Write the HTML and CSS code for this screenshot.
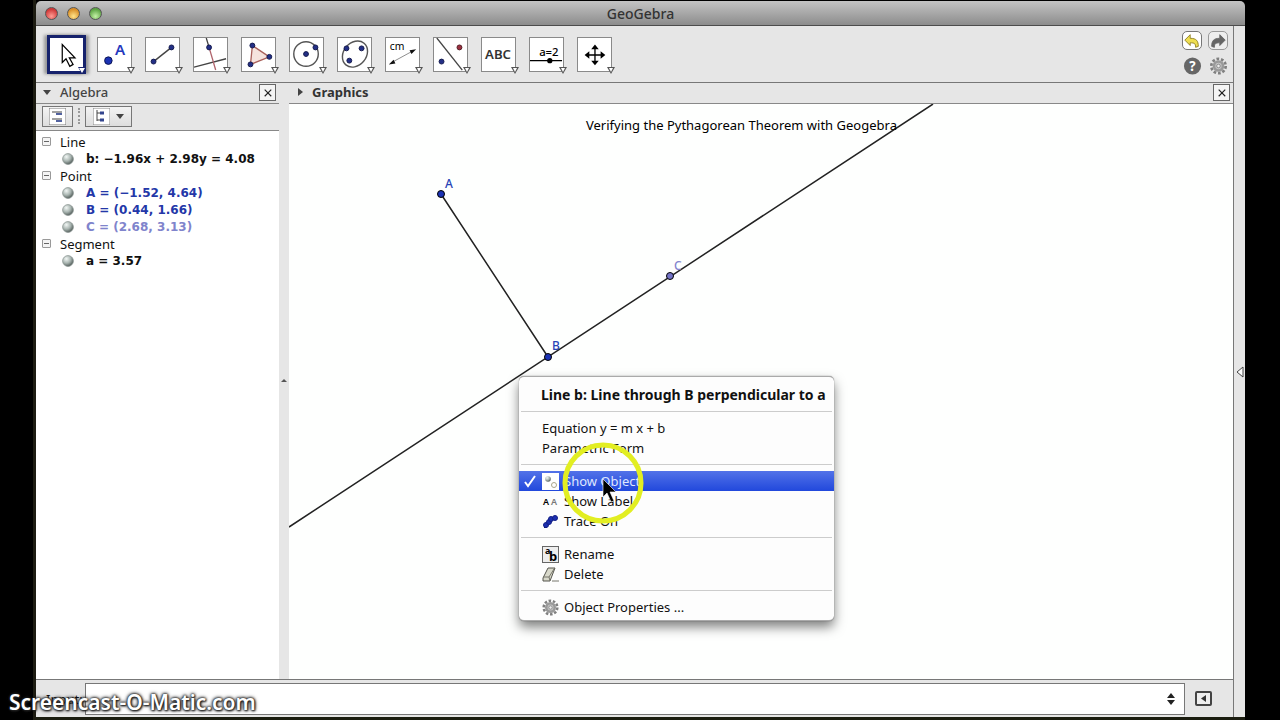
FILE: index.html
```html
<!DOCTYPE html>
<html lang="en">
<head>
    <meta charset="UTF-8">
    <meta name="viewport" content="width=device-width, initial-scale=1.0">
    <title>GeoGebra</title>
    <link rel="stylesheet" href="styles.css">
</head>
<body>
    <!-- Shared symbols -->
    <svg class="defs" width="0" height="0" aria-hidden="true">
        <defs>
            <radialGradient id="ball" cx="0.35" cy="0.3" r="0.8">
                <stop offset="0" stop-color="#f2f7f5"/>
                <stop offset="0.5" stop-color="#a9b5b1"/>
                <stop offset="1" stop-color="#3c4744"/>
            </radialGradient>
            <symbol id="marble" viewBox="0 0 12 12">
                <circle cx="6" cy="6" r="5.4" fill="url(#ball)" stroke="#8d9794" stroke-width="0.8"/>
            </symbol>
            <symbol id="gear" viewBox="0 0 20 20">
                <circle cx="10" cy="10" r="8" fill="none" stroke="#808080" stroke-width="3" stroke-dasharray="3 2.03"/>
                <circle cx="10" cy="10" r="5" fill="#c4c4c4" stroke="#9a9a9a" stroke-width="3"/>
                <circle cx="10" cy="10" r="2" fill="#eee" stroke="#888"/>
            </symbol>
        </defs>
    </svg>

    <div class="window">
        <header class="titlebar">
            <div class="lights">
                <button class="light red" aria-label="Close"></button>
                <button class="light yellow" aria-label="Minimize"></button>
                <button class="light green" aria-label="Zoom"></button>
            </div>
            <h1>GeoGebra</h1>
        </header>

        <div class="frame">
            <div class="content">
                <div class="toolbar">
                    <div class="tools">
                        <button class="tool selected" aria-label="Move">
                            <svg viewBox="0 0 35 35"><path d="M13 7v19l4-4 4 8 3.500-2-4-7h6z" fill="#fff" stroke="#000" stroke-width="1.3"/></svg>
                        </button>
                        <button class="tool" aria-label="New Point">
                            <svg viewBox="0 0 35 35"><circle cx="11" cy="24" r="4" fill="#1b32b4" stroke="#0a1250"/><text x="18" y="18" class="icon-a">A</text></svg>
                        </button>
                        <button class="tool" aria-label="Line">
                            <svg viewBox="0 0 35 35"><path d="M8 25L27 10" stroke="#444" stroke-width="1.5"/><g class="dots"><circle cx="8" cy="25" r="2.6"/><circle cx="27" cy="10" r="2.6"/></g></svg>
                        </button>
                        <button class="tool" aria-label="Perpendicular Line">
                            <svg viewBox="0 0 35 35"><path d="M0 31L34 22M13 0l3 10" stroke="#444" stroke-width="1.4"/><path d="M16 10l7 24" stroke="#b0646c" stroke-width="1.4"/><g class="dots"><circle cx="16" cy="10" r="2.6"/></g></svg>
                        </button>
                        <button class="tool" aria-label="Polygon">
                            <svg viewBox="0 0 35 35"><path d="M11 8L29 20 9 28z" fill="#f6e3de" stroke="#a9605a" stroke-width="1.4"/><g class="dots"><circle cx="11" cy="8" r="2.6"/><circle cx="29" cy="20" r="2.6"/><circle cx="9" cy="28" r="2.6"/></g></svg>
                        </button>
                        <button class="tool" aria-label="Circle">
                            <svg viewBox="0 0 35 35"><circle cx="17" cy="17" r="13" fill="none" stroke="#555" stroke-width="1.5"/><g class="dots"><circle cx="17" cy="17" r="2.6"/><circle cx="27" cy="10" r="2.6"/></g></svg>
                        </button>
                        <button class="tool" aria-label="Ellipse">
                            <svg viewBox="0 0 35 35"><ellipse cx="18" cy="17" rx="12" ry="15" transform="rotate(40 18 17)" fill="none" stroke="#555" stroke-width="1.5"/><g class="dots"><circle cx="9" cy="11" r="2.6"/><circle cx="25" cy="11" r="2.6"/><circle cx="12" cy="24" r="2.6"/></g></svg>
                        </button>
                        <button class="tool" aria-label="Distance">
                            <svg viewBox="0 0 35 35"><text x="4" y="13" class="icon-cm">cm</text><path d="M6 26L28 14" stroke="#888"/><path d="M3 28l5-5 2 4zM32 12l-7 1 2 4z" fill="#111"/></svg>
                        </button>
                        <button class="tool" aria-label="Reflect">
                            <svg viewBox="0 0 35 35"><path d="M3 0l27 34" stroke="#444" stroke-width="1.4"/><g class="dots"><circle cx="8" cy="25" r="2.6"/><circle cx="27" cy="10" r="2.6" class="red-dot"/></g></svg>
                        </button>
                        <button class="tool" aria-label="Text">
                            <svg viewBox="0 0 35 35"><text x="17" y="22" text-anchor="middle" class="icon-abc">ABC</text></svg>
                        </button>
                        <button class="tool" aria-label="Slider">
                            <svg viewBox="0 0 35 35"><text x="20" y="19" text-anchor="middle" class="icon-slider">a=2</text><path d="M0 24h34" stroke="#000" stroke-width="1.3"/><circle cx="21" cy="24" r="2.8"/></svg>
                        </button>
                        <button class="tool" aria-label="Move Graphics View">
                            <svg viewBox="0 0 35 35"><path d="M18 10v16M10 18h16" stroke="#000" stroke-width="1.4"/><path d="M18 7l4 5h-8zM18 29l4-5h-8zM7 18l5-4v8zM29 18l-5-4v8z"/></svg>
                        </button>
                    </div>
                    <div class="actions">
                        <button class="action boxed" aria-label="Undo"><svg viewBox="0 0 20 18"><path d="M2 8l6-6v4c7 0 9 3 9 9l-3 1c0-4-1-5-6-5v3z" fill="#eede50" stroke="#8d7d20"/></svg></button>
                        <button class="action boxed faded" aria-label="Redo"><svg viewBox="0 0 20 18"><path d="M18 8l-6-6v4c-7 0-9 3-9 9l3 1c0-4 1-5 6-5v3z" fill="#666" stroke="#666"/></svg></button>
                        <button class="action" aria-label="Help"><svg viewBox="0 0 20 18"><circle cx="10" cy="9" r="9" fill="#666"/><text x="10" y="14" text-anchor="middle" class="icon-help">?</text></svg></button>
                        <button class="action" aria-label="Settings"><svg viewBox="0 0 20 20"><use href="#gear"/></svg></button>
                    </div>
                </div>

                <div class="views">
                    <section class="algebra">
                        <div class="view-header">
                            <span class="arrow down"></span>
                            <h2>Algebra</h2>
                            <button class="close" aria-label="Close Algebra"><svg viewBox="0 0 16 16"><path d="M5 5l7 7M12 5l-7 7" stroke="#222" stroke-width="1.2"/></svg></button>
                        </div>
                        <div class="style-bar">
                            <button class="style-button" aria-label="Auxiliary Objects"><svg viewBox="0 0 17 17"><rect x="0" y="0" width="17" height="17" fill="#fff" stroke="#777"/><path d="M3 4h10M3 11h10" stroke="#444"/><path d="M7 6h6M7 13h6" stroke="#5262a0" stroke-width="2"/></svg></button>
                            <span class="grip"></span>
                            <button class="style-button wide" aria-label="Sort Objects by"><svg viewBox="0 0 17 17"><rect x="0" y="0" width="17" height="17" fill="#fff" stroke="#888"/><path d="M4 2v11M4 5h4M4 12h4" stroke="#444"/><path d="M7 5h4M7 12h4" stroke="#33458e" stroke-width="3"/></svg><span class="arrow down"></span></button>
                        </div>
                        <ul class="tree">
                            <li>
                                <div class="group"><button class="toggle" aria-label="Collapse Line"></button>Line</div>
                                <ul>
                                    <li class="object"><svg class="marble"><use href="#marble"/></svg>b: −1.96x + 2.98y = 4.08</li>
                                </ul>
                            </li>
                            <li>
                                <div class="group"><button class="toggle" aria-label="Collapse Point"></button>Point</div>
                                <ul>
                                    <li class="object blue"><svg class="marble"><use href="#marble"/></svg>A = (−1.52, 4.64)</li>
                                    <li class="object blue"><svg class="marble"><use href="#marble"/></svg>B = (0.44, 1.66)</li>
                                    <li class="object light-blue"><svg class="marble"><use href="#marble"/></svg>C = (2.68, 3.13)</li>
                                </ul>
                            </li>
                            <li>
                                <div class="group"><button class="toggle" aria-label="Collapse Segment"></button>Segment</div>
                                <ul>
                                    <li class="object"><svg class="marble"><use href="#marble"/></svg>a = 3.57</li>
                                </ul>
                            </li>
                        </ul>
                    </section>

                    <div class="splitter"><svg viewBox="0 0 6 4"><path d="M0 3l3-3 3 3z" fill="#555"/></svg></div>

                    <section class="graphics">
                        <div class="view-header">
                            <span class="arrow right"></span>
                            <h2 class="active">Graphics</h2>
                            <button class="close" aria-label="Close Graphics"><svg viewBox="0 0 16 16"><path d="M5 5l7 7M12 5l-7 7" stroke="#222" stroke-width="1.2"/></svg></button>
                        </div>
                        <div class="canvas">
                            <svg class="drawing">
                                <path d="M0 423L644 0M152 90L259 253" stroke="#222" stroke-width="1.5"/>
                                <circle cx="152" cy="90" r="3.5" fill="#1b32b4" stroke="#000"/>
                                <circle cx="259" cy="253" r="3.5" fill="#1b32b4" stroke="#000"/>
                                <circle cx="381" cy="172" r="3.5" fill="#7373c6" stroke="#000"/>
                                <text x="297" y="26" class="caption">Verifying the Pythagorean Theorem with Geogebra</text>
                                <text x="156" y="84" class="label">A</text>
                                <text x="263" y="246" class="label">B</text>
                                <text x="385" y="166" class="label light">C</text>
                            </svg>

                            <div class="context-menu">
                                <h3>Line b: Line through B perpendicular to a</h3>
                                <hr>
                                <button class="item">Equation y = m x + b</button>
                                <button class="item">Parametric Form</button>
                                <hr>
                                <button class="item highlighted">
                                    <svg class="check" viewBox="0 0 14 14"><path d="M2 8l3 4 7-10" fill="none" stroke="#fff" stroke-width="2"/></svg>
                                    <svg class="icon" viewBox="0 0 17 17"><path d="M0 0h17v17H0z" fill="#fff"/><circle cx="6" cy="6" r="2.8" fill="url(#ball)"/><circle cx="12" cy="12" r="2.5" fill="#fff" stroke="#aaa68a"/></svg>
                                    Show Object
                                </button>
                                <button class="item">
                                    <svg class="icon" viewBox="0 0 17 17"><text x="1" y="12" class="icon-aa">A</text><text x="9" y="12" class="icon-aa gray">A</text></svg>
                                    Show Label
                                </button>
                                <button class="item">
                                    <svg class="icon" viewBox="0 0 17 17"><path d="M2 14h3" stroke="#0c1660" stroke-width="2"/><g fill="#1c2fb0" stroke="#121f86"><circle cx="4" cy="12" r="2.5"/><circle cx="7" cy="9" r="2.5"/><circle cx="9" cy="6" r="2.5"/><circle cx="13" cy="5" r="2.5"/></g></svg>
                                    Trace On
                                </button>
                                <hr>
                                <button class="item">
                                    <svg class="icon" viewBox="0 0 17 17"><rect x="0.5" y="0.5" width="16" height="16" fill="#eee" stroke="#666"/><text x="3" y="8" class="icon-small">a</text><text x="7" y="15" class="icon-b">b</text></svg>
                                    Rename
                                </button>
                                <button class="item">
                                    <svg class="icon" viewBox="0 0 17 17"><path d="M6 2h7L8 15H1v-3z" fill="#d8d8ca" stroke="#55554d"/><path d="M1 11h6l5-8M7 11l1 4M10 15h7" fill="none" stroke="#77776c"/></svg>
                                    Delete
                                </button>
                                <hr>
                                <button class="item">
                                    <svg class="icon" viewBox="0 0 20 20"><use href="#gear"/></svg>
                                    Object Properties ...
                                </button>
                            </div>

                            <svg class="pointer" viewBox="0 0 84 84">
                                <circle cx="42" cy="43" r="38" fill="none" stroke="#e2ee22" stroke-width="5"/>
                                <path d="M42 39v18l4-4 4 9 3-1-4-9h6z" fill="#000" stroke="#fff" stroke-width="0.6"/>
                            </svg>
                        </div>
                    </section>
                </div>

                <div class="input-bar">
                    <label for="command">Input:</label>
                    <div class="field">
                        <input type="text" id="command">
                        <svg class="stepper" viewBox="0 0 8 14"><path d="M0 6l4-5 4 5zM0 8l4 5 4-5z" fill="#222"/></svg>
                    </div>
                    <button class="help-toggle" aria-label="Show Input Help"><svg viewBox="0 0 17 15"><rect x="1" y="1" width="15" height="13" rx="1" fill="#eee" stroke="#444" stroke-width="2"/><path d="M11 4v7L6 7.5z" fill="#333"/></svg></button>
                </div>
            </div>

            <aside class="side-strip"><svg viewBox="0 0 8 12"><path d="M7 1v10L1 6z" fill="#fff" stroke="#444"/></svg></aside>
        </div>
    </div>

    <div class="watermark">Screencast-O-Matic.com</div>
</body>
</html>
```
FILE: styles.css
```css
* {
    box-sizing: border-box;
}
body {
    margin: 0;
    background: #000;
    color: #111;
    font-family: "Noto Sans", "Open Sans", sans-serif;
    font-size: 13px;
    overflow: hidden;
}
h1, h2, h3, ul {
    margin: 0;
    padding: 0;
    font-size: 13px;
}
ul {
    list-style: none;
}
button {
    padding: 0;
    border: 0;
    background: none;
    color: inherit;
    font: inherit;
}
svg {
    display: block;
}
.defs {
    position: absolute;
}
.window {
    display: flex;
    flex-direction: column;
    height: 100vh;
    margin: 0 35px 0 36px;
    padding-top: 1px;
    border-bottom: 3px solid #1b1d10;
    box-shadow: -3px 0 0 #1d1c12;
}

/* Title bar */
.titlebar {
    display: grid;
    grid-template-columns: 1fr auto 1fr;
    align-items: center;
    height: 25px;
    padding: 0 9px;
    border-bottom: 1px solid #4c4c4c;
    border-radius: 5px 5px 0 0;
    background: linear-gradient(#c4c4c4, #8c8c8c);
}
.titlebar h1 {
    color: #333;
    font-size: 14px;
    font-weight: 500;
}
.lights {
    display: flex;
    gap: 9px;
}
.light {
    width: 13px;
    height: 13px;
    border: 1px solid #555;
    border-radius: 50%;
}
.red {
    background: radial-gradient(circle at 50% 75%, #ff9d94, #cf3838 70%);
}
.yellow {
    background: radial-gradient(circle at 50% 75%, #ffe48a, #d98f28 70%);
}
.green {
    background: radial-gradient(circle at 50% 75%, #c4f2a6, #5da444 70%);
}

.frame {
    display: flex;
    flex: 1;
    min-height: 0;
    background: #e6e6e6;
}
.content {
    display: flex;
    flex: 1;
    flex-direction: column;
    min-width: 0;
}
.side-strip {
    display: flex;
    align-items: center;
    justify-content: center;
    width: 12px;
    border-left: 1px solid #777;
}
.side-strip svg {
    width: 8px;
    height: 12px;
}

/* Toolbar */
.toolbar {
    display: flex;
    align-items: center;
    justify-content: space-between;
    height: 57px;
    padding: 0 5px 0 11px;
    border-bottom: 1px solid #777;
}
.tools {
    display: flex;
    align-items: center;
    gap: 13px;
}
.tool {
    position: relative;
    width: 35px;
    height: 35px;
    border: 1px solid #8a8a8a;
    background: #fff;
}
.tool svg {
    width: 33px;
    height: 33px;
}
.tool::before,
.tool::after {
    content: "";
    position: absolute;
    right: -4px;
    bottom: -3px;
    border: 4px solid transparent;
    border-top: 7px solid #555;
    border-bottom: 0;
}
.tool::after {
    right: -2px;
    bottom: -1px;
    border-width: 4px 2px 0;
    border-top-color: #fff;
}
.tool.selected {
    width: 39px;
    height: 39px;
    margin-right: -2px;
    border: 3px solid #16226c;
    box-shadow: -3px 0 3px #999, 3px 0 3px #999;
}
.tool.selected::before {
    right: -3px;
    bottom: -3px;
    border-top-color: #16226c;
}
.tool.selected::after {
    right: -2px;
    bottom: -2px;
    border-width: 5px 3px 0;
}
.dots {
    fill: #232f86;
    stroke: #10164a;
}
.dots .red-dot {
    fill: #9c3040;
    stroke: #501820;
}
.icon-a {
    fill: #2438bd;
    font-size: 16px;
    font-weight: 600;
}
.icon-cm {
    font-size: 11px;
}
.icon-abc {
    font-size: 14px;
    font-weight: 600;
    fill: #333;
}
.icon-slider {
    font-size: 12px;
    font-weight: 500;
}
.icon-help {
    fill: #fff;
    font-size: 14px;
    font-weight: 700;
}
.actions {
    display: grid;
    grid-template-columns: 20px 20px;
    gap: 6px;
    padding-bottom: 2px;
}
.action {
    display: flex;
    align-items: center;
    justify-content: center;
    width: 20px;
    height: 19px;
}
.action svg {
    width: 19px;
    height: 18px;
}
.boxed {
    border: 1px solid #777;
    border-radius: 5px;
    background: #fff;
}
.faded {
    border-color: #999;
    background: #eee;
}

/* Views */
.views {
    display: flex;
    flex: 1;
    min-height: 0;
}
.algebra {
    display: flex;
    flex-direction: column;
    width: 243px;
    background: #fff;
}
.view-header {
    display: flex;
    align-items: center;
    gap: 9px;
    height: 21px;
    padding: 0 3px 2px 7px;
    border-bottom: 1px solid #888;
    background: #e6e6e6;
}
.view-header h2 {
    flex: 1;
    color: #444;
    font-weight: 500;
}
.view-header .active {
    color: #333;
    font-weight: 700;
}
.close {
    width: 17px;
    height: 17px;
    border: 1px solid #666;
    background: #f4f4f4;
}
.close svg {
    width: 15px;
    height: 15px;
}
.arrow {
    border: 4px solid transparent;
}
.arrow.down {
    border-top: 5px solid #444;
    border-bottom: 0;
}
.arrow.right {
    border-left: 5px solid #444;
    border-right: 0;
}
.style-bar {
    display: flex;
    align-items: center;
    gap: 5px;
    height: 27px;
    padding: 0 6px 2px;
    border-bottom: 1px solid #888;
    background: #e6e6e6;
}
.style-button {
    display: flex;
    align-items: center;
    justify-content: center;
    gap: 6px;
    width: 31px;
    height: 21px;
    border: 1px solid #777;
    background: linear-gradient(#f4f4f4, #ddd);
}
.style-button svg {
    width: 17px;
    height: 17px;
}
.style-button.wide {
    width: 47px;
}
.grip {
    height: 16px;
    border-left: 2px dotted #999;
}
.tree {
    padding: 2px 0 0 6px;
}
.group {
    display: flex;
    align-items: center;
    gap: 9px;
    height: 17px;
}
.toggle {
    width: 9px;
    height: 9px;
    border: 1px solid #999;
    border-radius: 1px;
    background: linear-gradient(#666, #666) center / 5px 1px no-repeat #f4f4f4;
}
.object {
    display: flex;
    align-items: center;
    gap: 12px;
    height: 17px;
    padding-left: 20px;
    font-family: "DejaVu Sans", sans-serif;
    font-size: 12px;
    font-weight: 700;
}
.marble {
    width: 12px;
    height: 12px;
}
.blue {
    color: #2337a8;
}
.light-blue {
    color: #8084cc;
}
.splitter {
    display: flex;
    align-items: center;
    justify-content: center;
    width: 10px;
}
.splitter svg {
    width: 6px;
    height: 4px;
}
.graphics {
    display: flex;
    flex: 1;
    flex-direction: column;
    min-width: 0;
}
.graphics .view-header {
    padding-left: 9px;
}
.canvas {
    position: relative;
    flex: 1;
    min-height: 0;
    background: #fefffe;
}
.drawing {
    width: 100%;
    height: 100%;
}
.caption {
    font-size: 13px;
}
.label {
    fill: #2743b5;
    font-size: 12px;
    font-weight: 500;
}
.label.light {
    fill: #8484ce;
}

/* Context menu */
.context-menu {
    position: absolute;
    left: 230px;
    top: 272px;
    width: 315px;
    padding: 8px 0 3px;
    border: 1px solid #aaa;
    border-width: 1px 0;
    border-radius: 5px;
    background: #fdfdfd;
    box-shadow: 0 6px 12px rgba(0, 0, 0, 0.5), 0 0 1px #555;
}
.context-menu h3 {
    padding-left: 22px;
    font-size: 14px;
    line-height: 20px;
    white-space: nowrap;
}
.context-menu hr {
    margin: 6px 2px;
    border: 0;
    border-top: 1px solid #ccc;
}
.item {
    position: relative;
    display: flex;
    align-items: center;
    gap: 5px;
    width: 100%;
    height: 20px;
    padding-left: 23px;
    text-align: left;
}
.item .icon {
    width: 17px;
    height: 17px;
    overflow: visible;
}
.item.highlighted {
    background: linear-gradient(#5272e8, #2148dc);
    color: #dfe6ff;
}
.check {
    position: absolute;
    left: 4px;
    width: 14px;
    height: 14px;
}
.icon-aa {
    font-size: 9px;
    font-weight: 600;
}
.icon-aa.gray {
    fill: #777;
}
.icon-small {
    font-size: 9px;
    font-weight: 700;
}
.icon-b {
    font-size: 13px;
    font-weight: 700;
}
.pointer {
    position: absolute;
    left: 272px;
    top: 336px;
    width: 84px;
    height: 84px;
    pointer-events: none;
}

/* Input bar */
.input-bar {
    display: flex;
    align-items: center;
    height: 38px;
    padding: 0 21px 0 10px;
    border-top: 1px solid #777;
}
.input-bar label {
    width: 39px;
}
.field {
    position: relative;
    flex: 1;
}
.field input {
    display: block;
    width: 100%;
    height: 32px;
    padding: 0 24px 0 6px;
    border: 1px solid #777;
    background: #fff;
    font: inherit;
}
.stepper {
    position: absolute;
    right: 10px;
    top: 9px;
    width: 8px;
    height: 14px;
}
.help-toggle {
    margin-left: 10px;
}
.help-toggle svg {
    width: 17px;
    height: 15px;
}

.watermark {
    position: absolute;
    left: 9px;
    bottom: 4px;
    color: #fff;
    font-size: 21px;
    font-weight: 600;
    line-height: 28px;
    text-shadow: 0 0 2px #222, 0 0 3px #222, 0 0 4px #222, 1px 1px 2px #222;
}
```
